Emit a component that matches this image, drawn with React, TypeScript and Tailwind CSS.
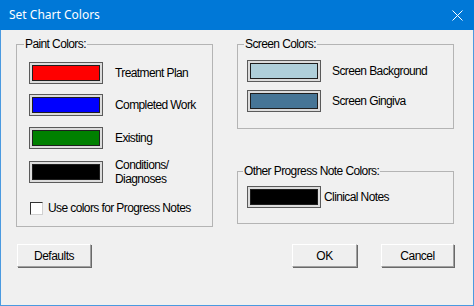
import React from "react";

const font = { fontFamily: '"Liberation Sans", Arial, sans-serif' };

function Swatch({ color }: { color: string }) {
  return (
    <div className="w-[74px] h-[22px] border border-[#5a5a5a] bg-[#dcdcdc] p-[2px] shrink-0">
      <div className="w-full h-full border border-[#1e1e1e]" style={{ background: color }} />
    </div>
  );
}

function Btn({ label, w }: { label: string; w: string }) {
  return (
    <div
      className={`${w} h-[23px] flex items-center justify-center bg-[#efefef] border-t border-l border-white border-b border-r border-b-[#a0a0a0] border-r-[#a0a0a0] shadow-[1px_1px_0_#696969] text-[12px] tracking-[-0.5px] whitespace-nowrap text-black`}
    >
      {label}
    </div>
  );
}

const txt = "text-[12px] tracking-[-0.6px] whitespace-nowrap";

export default function App() {
  return (
    <div className="w-[474px] h-[306px] flex flex-col bg-[#f0f0f0] border-l border-r border-b border-[#4a9ae0] text-black" style={font}>
      <div className="h-[30px] -mx-px bg-[#0078d7] flex items-center justify-between pl-[9px] pr-[10px] shrink-0">
        <span className="text-white text-[12px]" style={{ fontFamily: '"Noto Sans", "Open Sans", sans-serif' }}>
          Set Chart Colors
        </span>
        <svg width="11" height="11" viewBox="0 0 11 11" className="mr-[1px]">
          <path d="M0.5 0.5 L10.5 10.5 M10.5 0.5 L0.5 10.5" stroke="white" strokeWidth="1" />
        </svg>
      </div>
      <div className="flex-1 flex flex-col pl-[15px] pt-[7px]">
        <div className="flex gap-[24px] items-start">
          <fieldset className="w-[197px] h-[190px] border border-[#b4b4b4] px-[12px]">
            <legend className={`-ml-[5px] px-[1px] leading-[14px] ${txt}`}>Paint Colors:</legend>
            <div className="flex items-center mt-[11px]">
              <Swatch color="#ff0000" />
              <span className={`ml-[12px] ${txt}`}>Treatment Plan</span>
            </div>
            <div className="flex items-center mt-[10px]">
              <Swatch color="#0000ff" />
              <span className={`ml-[12px] ${txt}`}>Completed Work</span>
            </div>
            <div className="flex items-center mt-[11px]">
              <Swatch color="#008000" />
              <span className={`ml-[12px] ${txt}`}>Existing</span>
            </div>
            <div className="flex items-center h-[22px] mt-[12px]">
              <Swatch color="#000000" />
              <span className={`ml-[12px] leading-[14px] -my-[3px] ${txt}`}>
                Conditions/
                <br />
                Diagnoses
              </span>
            </div>
            <div className="flex items-center mt-[16px]">
              <div className="w-[13px] h-[13px] bg-white border border-[#333] border-r-[#d0d0d0] border-b-[#d0d0d0] ml-[1px] shrink-0" />
              <span className={`ml-[5px] ${txt}`}>Use colors for Progress Notes</span>
            </div>
          </fieldset>
          <div className="flex flex-col">
            <fieldset className="w-[217px] h-[92px] border border-[#b4b4b4] px-[9px]">
              <legend className={`-ml-[3px] px-[1px] leading-[14px] ${txt}`}>Screen Colors:</legend>
              <div className="flex items-center mt-[9px]">
                <Swatch color="#afcfda" />
                <span className={`ml-[11px] ${txt}`}>Screen Background</span>
              </div>
              <div className="flex items-center mt-[8px]">
                <Swatch color="#467596" />
                <span className={`ml-[11px] ${txt}`}>Screen Gingiva</span>
              </div>
            </fieldset>
            <fieldset className="w-[217px] h-[60px] mt-[35px] border border-[#b4b4b4] px-[9px]">
              <legend className={`-ml-[4px] px-[1px] leading-[14px] ${txt}`}>Other Progress Note Colors:</legend>
              <div className="flex items-center mt-[8px]">
                <Swatch color="#000000" />
                <span className={`ml-[3px] ${txt}`}>Clinical Notes</span>
              </div>
            </fieldset>
          </div>
        </div>
        <div className="flex items-start mt-[17px]">
          <div className="ml-[1px]">
            <Btn label="Defaults" w="w-[74px]" />
          </div>
          <div className="ml-[201px]">
            <Btn label="OK" w="w-[65px]" />
          </div>
          <div className="ml-[24px]">
            <Btn label="Cancel" w="w-[73px]" />
          </div>
        </div>
      </div>
    </div>
  );
}
